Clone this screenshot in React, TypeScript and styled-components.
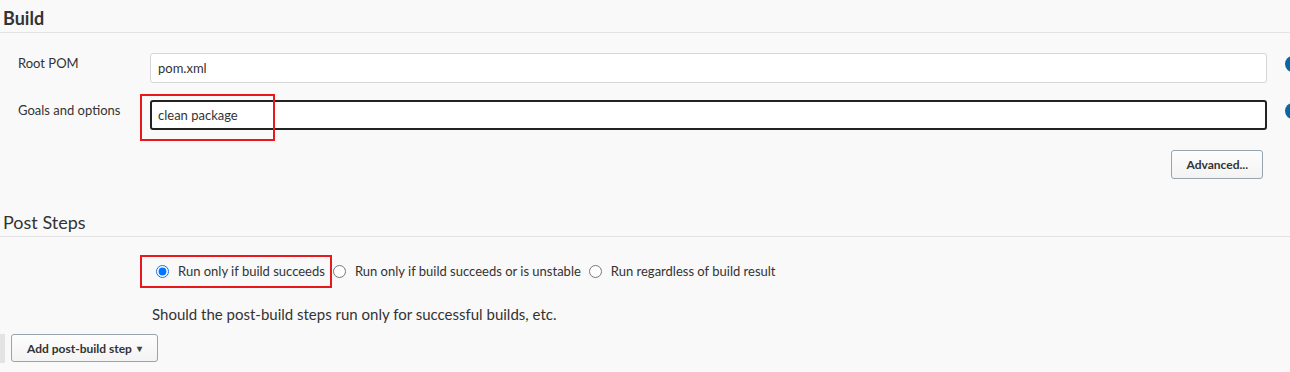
import styled, { createGlobalStyle } from "styled-components";

const GlobalStyle = createGlobalStyle`
    html, body {
        margin: 0;
        padding: 0;
        background: #f9f9f9;
        overflow: hidden;
    }
    body {
        font-family: Lato, "Liberation Sans", sans-serif;
        color: #333;
        width: 1290px;
    }
`

const radioOptions = [
    { label: "Run only if build succeeds", checked: true },
    { label: "Run only if build succeeds or is unstable", checked: false },
    { label: "Run regardless of build result", checked: false },
];

export default function App() {
    return (
        <Page>
            <GlobalStyle/>
            <SectionHeader>Build</SectionHeader>
            <Form>
                <FieldRow>
                    <Label>Root POM</Label>
                    <InputCell>
                        <TextInput defaultValue="pom.xml"/>
                    </InputCell>
                    <HelpIcon/>
                </FieldRow>
                <FieldRow>
                    <Label>Goals and options</Label>
                    <InputCell>
                        <TextInput defaultValue="clean package" $focused/>
                        <Annotation style={{ left: -10, top: -6, width: 135, height: 47 }}/>
                    </InputCell>
                    <HelpIcon/>
                </FieldRow>
            </Form>
            <ButtonBar>
                <Button>Advanced...</Button>
            </ButtonBar>

            <SectionHeader $spaced>Post Steps</SectionHeader>
            <RadioRow>
                {radioOptions.map((o, i) => (
                    <RadioLabel key={o.label} $first={i === 0}>
                        <Radio type="radio" name="postSteps" defaultChecked={o.checked}/>
                        <span>{o.label}</span>
                    </RadioLabel>
                ))}
                <Annotation style={{ left: -10, top: 0, width: 192, height: 33 }}/>
            </RadioRow>
            <Description>Should the post-build steps run only for successful builds, etc.</Description>
            <StepBar>
                <Button $wide>Add post-build step <Caret>▾</Caret></Button>
            </StepBar>
        </Page>
    );
}

const Page = styled.div`
    display: flex;
    flex-direction: column;
`

const SectionHeader = styled.div<{ $spaced?: boolean }>`
    font-size: 18px;
    font-weight: ${p => p.$spaced ? 400 : 700};
    line-height: 24px;
    padding: 6px 0 2px 3px;
    margin-top: ${p => p.$spaced ? '25px' : '0'};
    border-bottom: 1px solid #e3e3e3;
`

const Form = styled.div`
    display: flex;
    flex-direction: column;
    row-gap: 17px;
    margin-top: 20px;
`

const FieldRow = styled.div`
    display: grid;
    grid-template-columns: 150px 1117px 16px;
    align-items: start;
`

const Label = styled.div`
    font-size: 13px;
    padding: 1px 0 0 18px;
    line-height: 18px;
    color: #333;
`

const InputCell = styled.div`
    position: relative;
`

const TextInput = styled.input<{ $focused?: boolean }>`
    box-sizing: border-box;
    width: 100%;
    height: 30px;
    border: ${p => p.$focused ? '2px solid #222' : '1px solid #d6d6d6'};
    border-radius: 3px;
    background: #fff;
    padding: 0 ${p => p.$focused ? '6px' : '7px'};
    font-family: Lato, "Liberation Sans", sans-serif;
    font-size: 13px;
    color: #333;
    outline: none;
`

const HelpIcon = styled.div`
    width: 16px;
    height: 16px;
    border-radius: 50%;
    background: #0b67a1;
    margin: 3px 0 0 18px;
`

const Annotation = styled.div`
    position: absolute;
    box-sizing: border-box;
    border: 2px solid #e8191c;
    pointer-events: none;
`

const ButtonBar = styled.div`
    display: flex;
    justify-content: flex-end;
    width: 1263px;
    margin-top: 20px;
`

const Button = styled.button<{ $wide?: boolean }>`
    box-sizing: border-box;
    height: ${p => p.$wide ? '28px' : '29px'};
    padding: 0 ${p => p.$wide ? '15px' : '14px'};
    border: 1px solid #97a4ad;
    border-radius: 3px;
    background: linear-gradient(#fdfdfd, #f3f3f3);
    font-family: Lato, "Liberation Sans", sans-serif;
    font-size: 12px;
    font-weight: 700;
    color: #333;
    display: flex;
    align-items: center;
    column-gap: 5px;
`

const Caret = styled.span`
    font-size: 10px;
    color: #444;
`

const RadioRow = styled.div`
    position: relative;
    display: flex;
    align-items: center;
    height: 32px;
    margin: 18px 0 0 150px;
    font-size: 13px;
`

const RadioLabel = styled.label<{ $first?: boolean }>`
    display: flex;
    align-items: center;
    column-gap: 9px;
    margin-left: ${p => p.$first ? '6px' : '8px'};
    color: #333;
`

const Radio = styled.input`
    margin: 0;
    width: 13px;
    height: 13px;
    accent-color: #0075ff;
`

const Description = styled.div`
    margin: 17px 0 0 152px;
    font-size: 15px;
    line-height: 20px;
    color: #333;
`

const StepBar = styled.div`
    margin-top: 10px;
    border-left: 5px solid #e3e3e3;
    padding: 0 0 1px 6px;
    display: flex;
`
